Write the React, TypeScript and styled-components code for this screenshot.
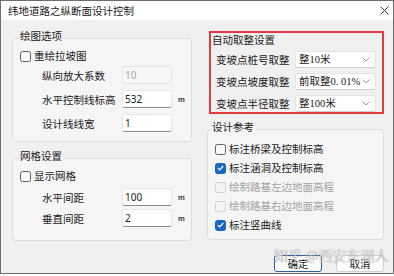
import styled, { createGlobalStyle } from "styled-components";

const GlobalStyle = createGlobalStyle`
    html, body {
        margin: 0;
        padding: 0;
        background: #ffffff;
    }
    body {
        font-family: "Noto Sans CJK SC", "Noto Sans", sans-serif;
        font-size: 10.5px;
        color: #1a1a1a;
    }
    * {
        box-sizing: border-box;
    }
`;

const Window = styled.div`
    position: relative;
    width: 394px;
    height: 274px;
    border: 1px solid #6e6e6e;
    background: #f0f0f0;
    display: flex;
    flex-direction: column;
    overflow: hidden;
`;

const TitleBar = styled.div`
    height: 19px;
    flex: none;
    background: #ffffff;
    display: flex;
    align-items: center;
    justify-content: space-between;
    padding: 0 4px 0 7px;
    line-height: 19px;
    color: #1a1a1a;
`;

const Body = styled.div`
    display: flex;
    align-items: flex-start;
    gap: 15px;
    padding: 9px 9px 0 11px;
`;

const Column = styled.div<{ $w: number }>`
    width: ${(p) => p.$w}px;
    display: flex;
    flex-direction: column;
`;

const Group = styled.fieldset<{ $h: number; $top: number; $mt?: number }>`
    margin: ${(p) => p.$mt ?? 0}px 0 0 0;
    height: ${(p) => p.$h}px;
    min-width: 0;
    border: 1px solid #dcdcdc;
    border-radius: 4px;
    background: #f5f5f5;
    padding: ${(p) => p.$top}px 8px 0 7px;
`;

const Legend = styled.legend<{ $x?: number }>`
    padding: 0 1px 5px;
    margin-left: ${(p) => p.$x ?? -1}px;
    line-height: 14px;
`;

const Stack = styled.div<{ $gap: number; $mt?: number; $pl?: number }>`
    display: flex;
    flex-direction: column;
    gap: ${(p) => p.$gap}px;
    margin-top: ${(p) => p.$mt ?? 0}px;
    padding-left: ${(p) => p.$pl ?? 0}px;
`;

const CheckRow = styled.div<{ $disabled?: boolean }>`
    display: flex;
    align-items: center;
    gap: 3px;
    height: 14px;
    line-height: 14px;
    color: ${(p) => (p.$disabled ? "#a3a3a3" : "#1a1a1a")};
`;

const Box = styled.span<{ $checked?: boolean; $disabled?: boolean }>`
    width: 11px;
    height: 11px;
    flex: none;
    border-radius: 2.5px;
    border: 1px solid
        ${(p) => (p.$checked ? "#1565c0" : p.$disabled ? "#d2d2d2" : "#5f5f5f")};
    background: ${(p) => (p.$checked ? "#1a67c4" : p.$disabled ? "#f4f4f4" : "#f9f9f9")};
    display: flex;
    align-items: center;
    justify-content: center;
`;

const FieldRow = styled.div`
    display: flex;
    align-items: center;
    height: 18px;
    padding-left: 22px;
`;

const Label = styled.span<{ $w: number }>`
    width: ${(p) => p.$w}px;
    flex: none;
    white-space: nowrap;
`;

const TextBox = styled.div<{ $disabled?: boolean }>`
    width: 50px;
    height: 18px;
    flex: none;
    border: 1px solid ${(p) => (p.$disabled ? "#e4e4e4" : "#e6e6e6")};
    border-bottom-color: ${(p) => (p.$disabled ? "#e4e4e4" : "#8a8a8a")};
    border-radius: 3px;
    background: ${(p) => (p.$disabled ? "#f6f6f6" : "#ffffff")};
    color: ${(p) => (p.$disabled ? "#a6a6a6" : "#1a1a1a")};
    font-family: "Noto Sans", sans-serif;
    font-size: 10px;
    line-height: 16px;
    padding-left: 2px;
`;

const Unit = styled.span`
    margin-left: 6px;
    font-family: "Noto Sans", sans-serif;
    font-size: 7px;
    font-weight: bold;
    color: #444;
`;

const RedFrame = styled.div`
    margin: 2px 0 0 2px;
    height: 83px;
    border: 2px solid #e23b3b;
    padding: 2px 6px 0 1px;
`;

const FrameTitle = styled.div`
    line-height: 9px;
`;

const ComboRow = styled.div`
    display: flex;
    align-items: center;
    height: 17px;
`;

const Combo = styled.div`
    width: 81px;
    height: 17px;
    flex: none;
    display: flex;
    align-items: center;
    justify-content: space-between;
    border: 1px solid #e4e4e4;
    border-bottom-color: #cfcfcf;
    border-radius: 3px;
    background: #ffffff;
    padding: 0 5px 0 3px;
    font-family: "Liberation Serif", "Noto Sans CJK SC", serif;
    font-size: 10.5px;
    line-height: 15px;
    white-space: nowrap;
`;

const Footer = styled.div`
    display: flex;
    justify-content: flex-end;
    gap: 14px;
    margin-top: 14px;
    padding-right: 9px;
`;

const Button = styled.div<{ $primary?: boolean }>`
    width: 48px;
    height: 17px;
    display: flex;
    align-items: center;
    justify-content: center;
    border-radius: 3px;
    background: #fdfdfd;
    border: ${(p) => (p.$primary ? "1.5px solid #2a5f9a" : "1px solid #d0d0d0")};
    line-height: 15px;
`;

const Watermark = styled.div`
    position: absolute;
    left: 273px;
    top: 246px;
    font-size: 14px;
    line-height: 17px;
    color: rgba(255, 255, 255, 0.75);
    text-shadow: 0 0 1px rgba(0, 0, 0, 0.55);
    white-space: nowrap;
    pointer-events: none;
`;

const Check = ({ checked, disabled, label }: { checked?: boolean; disabled?: boolean; label: string }) => (
    <CheckRow $disabled={disabled}>
        <Box $checked={checked} $disabled={disabled}>
            {checked && (
                <svg width="7" height="6" viewBox="0 0 7 6">
                    <path d="M0.8 3.1 L2.7 4.9 L6.2 1" fill="none" stroke="#fff" strokeWidth="1.2" />
                </svg>
            )}
        </Box>
        <span>{label}</span>
    </CheckRow>
);

const Field = ({ label, value, unit, disabled }: { label: string; value: string; unit?: boolean; disabled?: boolean }) => (
    <FieldRow>
        <Label $w={80}>{label}</Label>
        <TextBox $disabled={disabled}>{value}</TextBox>
        {unit && <Unit>m</Unit>}
    </FieldRow>
);

const Chevron = () => (
    <svg width="8" height="5" viewBox="0 0 8 5">
        <path d="M0.5 0.5 L4 4 L7.5 0.5" fill="none" stroke="#9a9a9a" strokeWidth="1" />
    </svg>
);

const rounding = [
    { label: "变坡点桩号取整", value: "整10米" },
    { label: "变坡点坡度取整", value: "前取整0. 01%" },
    { label: "变坡点半径取整", value: "整100米" },
];

const references = [
    { label: "标注桥梁及控制标高" },
    { label: "标注涵洞及控制标高", checked: true },
    { label: "绘制路基左边地面高程", disabled: true },
    { label: "绘制路基右边地面高程", disabled: true },
    { label: "标注竖曲线", checked: true },
];

export default function App() {
    return (
        <>
            <GlobalStyle />
            <Window>
                <TitleBar>
                    <span>纬地道路之纵断面设计控制</span>
                    <svg width="9" height="9" viewBox="0 0 9 9">
                        <path d="M0.5 0.5 L8.5 8.5 M8.5 0.5 L0.5 8.5" stroke="#333" strokeWidth="1" />
                    </svg>
                </TitleBar>

                <Body>
                    <Column $w={180}>
                        <Group $h={113} $top={1}>
                            <Legend>绘图选项</Legend>
                            <Check label="重绘拉坡图" />
                            <Stack $gap={6} $mt={3}>
                                <Field label="纵向放大系数" value="10" disabled />
                                <Field label="水平控制线标高" value="532" unit />
                                <Field label="设计线线宽" value="1" />
                            </Stack>
                        </Group>

                        <Group $h={92} $top={1} $mt={7}>
                            <Legend>网格设置</Legend>
                            <Check label="显示网格" />
                            <Stack $gap={3} $mt={5}>
                                <Field label="水平间距" value="100" unit />
                                <Field label="垂直间距" value="2" unit />
                            </Stack>
                        </Group>
                    </Column>

                    <Column $w={177}>
                        <RedFrame>
                            <FrameTitle>自动取整设置</FrameTitle>
                            <Stack $gap={5} $mt={7} $pl={4}>
                                {rounding.map((r) => (
                                    <ComboRow key={r.label}>
                                        <Label $w={79}>{r.label}</Label>
                                        <Combo>
                                            <span>{r.value}</span>
                                            <Chevron />
                                        </Combo>
                                    </ComboRow>
                                ))}
                            </Stack>
                        </RedFrame>

                        <Group $h={120} $top={3} $mt={6}>
                            <Legend $x={-4}>设计参考</Legend>
                            <Stack $gap={5}>
                                {references.map((r) => (
                                    <Check key={r.label} {...r} />
                                ))}
                            </Stack>
                        </Group>
                    </Column>
                </Body>

                <Footer>
                    <Button $primary>确定</Button>
                    <Button>取消</Button>
                </Footer>

                <Watermark>知乎 @西安东湖人</Watermark>
            </Window>
        </>
    );
}
